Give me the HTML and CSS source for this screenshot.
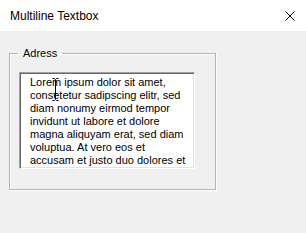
FILE: index.html
```html
<!DOCTYPE html>
<html lang="en">
<head>
    <meta charset="UTF-8">
    <title>Multiline Textbox</title>
    <link rel="stylesheet" href="styles.css">
</head>
<body>
    <div class="window">
        <header class="titlebar">
            <span class="title">Multiline Textbox</span>
            <svg class="close" width="10" height="10" viewBox="0 0 10 10">
                <path d="M0.5 0.5 L9.5 9.5 M9.5 0.5 L0.5 9.5" stroke="#000" stroke-width="1" fill="none"/>
            </svg>
        </header>
        <main class="client">
            <fieldset class="group">
                <legend>Adress</legend>
                <div class="textbox">
                    <div>Lorem ipsum dolor sit amet,</div>
                    <div>consetetur sadipscing elitr, sed</div>
                    <div>diam nonumy eirmod tempor</div>
                    <div>invidunt ut labore et dolore</div>
                    <div>magna aliquyam erat, sed diam</div>
                    <div>voluptua. At vero eos et</div>
                    <div>accusam et justo duo dolores et</div>
                </div>
            </fieldset>
            <!-- mouse cursor over the text -->
            <svg class="ibeam" width="7" height="23" viewBox="0 0 7 23">
                <path d="M0.5 0.5 H2.5 L3.5 1.5 L4.5 0.5 H6.5 M3.5 1.5 V21.5 M0.5 22.5 H2.5 L3.5 21.5 L4.5 22.5 H6.5 M1.5 15.5 H5.5" stroke="#000" stroke-width="1" fill="none"/>
            </svg>
        </main>
    </div>
</body>
</html>
```

FILE: styles.css
```css
body {
    margin: 0;
    font-family: "Liberation Sans", Arial, sans-serif;
}

.window {
    width: 306px;
    height: 233px;
    background: #f0f0f0;
    position: relative;
    overflow: hidden;
}

.titlebar {
    height: 31px;
    background: #fff;
    display: flex;
    align-items: center;
    justify-content: space-between;
    padding: 0 11px 0 10px;
    box-sizing: border-box;
}

.title {
    font-size: 12px;
    color: #000;
}

.client {
    padding: 15px 0 0 9px;
}

.group {
    width: 207px;
    box-sizing: border-box;
    margin: 0;
    padding: 0 9px 20px 9px;
    border: 1px solid #b4b4b4;
    box-shadow: inset 1px 1px 0 #fff, 1px 1px 0 #fff;
}

.group legend {
    font-size: 11px;
    line-height: 14px;
    padding: 0 5px;
    margin-left: -1px;
    color: #000;
}

.textbox {
    margin-top: 12px;
    width: 176px;
    height: 97px;
    box-sizing: border-box;
    background: #fff;
    border: 1px solid;
    border-color: #a0a0a0 #fff #fff #a0a0a0;
    box-shadow: inset 1px 1px 0 #696969, inset -1px -1px 0 #e3e3e3;
    padding: 3px 0 0 10px;
    font-size: 11px;
    line-height: 13px;
    color: #000;
    white-space: nowrap;
    overflow: hidden;
}

.ibeam {
    position: absolute;
    left: 52px;
    top: 78px;
}
```
